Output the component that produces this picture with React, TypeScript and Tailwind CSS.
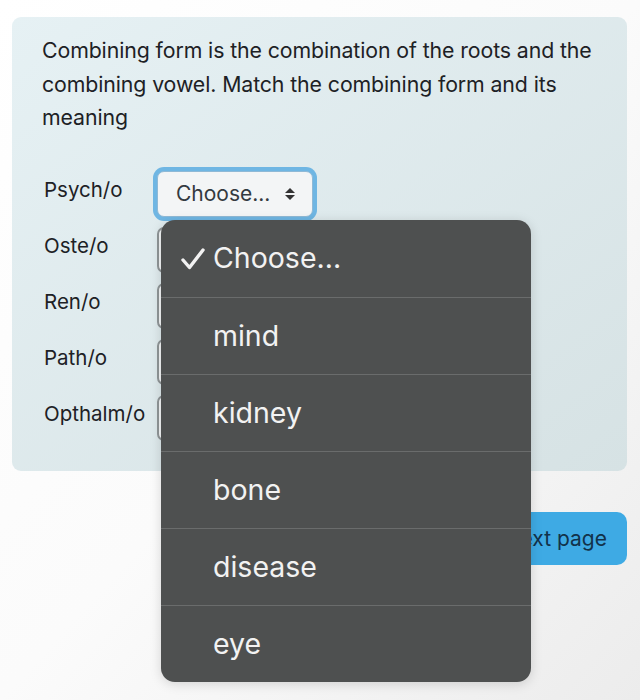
import React from "react";

const rows = ["Psych/o", "Oste/o", "Ren/o", "Path/o", "Opthalm/o"];
const options = ["Choose...", "mind", "kidney", "bone", "disease", "eye"];

function UpDown() {
  return (
    <svg width="12" height="14" viewBox="0 0 12 14" className="ml-[14px]">
      <path d="M6 1 L11 6 H1 Z" fill="#333" />
      <path d="M6 13 L11 8 H1 Z" fill="#333" />
    </svg>
  );
}

export default function App() {
  return (
    <div
      className="relative w-[640px] h-[700px] overflow-hidden bg-gradient-to-br from-[#ffffff] via-[#fbfbfb] to-[#ececec] pt-[17px]"
      style={{ fontFamily: "Inter, 'Noto Sans', sans-serif" }}
    >
      <div className="mx-[12px] w-[615px] h-[454px] rounded-[9px] bg-gradient-to-br from-[#e6f1f4] to-[#d6e2e4] pl-[30px] pr-[14px] pt-[17px]">
        <p className="text-[21.3px] leading-[33.5px] text-[#1d2125] tracking-[-0.1px]">
          Combining form is the combination of the roots and the combining vowel. Match the combining form and its meaning
        </p>
        <div className="mt-[36px] flex flex-col gap-[10px]">
          {rows.map((r, i) => (
            <div key={r} className="flex items-start">
              <div className="w-[115px] pl-[2px] pt-[7px] text-[20.5px] leading-[24px] text-[#1d2125]">{r}</div>
              {i === 0 ? (
                <div className="h-[46px] w-[156px] rounded-[7px] bg-[#f3f5f6] border border-[#8fb9d6] shadow-[0_0_0_4px_#6fb6e3] flex items-center pl-[18px] text-[21px] text-[#333a40]">
                  Choose...
                  <UpDown />
                </div>
              ) : (
                <div className="h-[46px] w-[156px] rounded-[7px] bg-[#f3f5f6] border-2 border-[#8f9597]" />
              )}
            </div>
          ))}
        </div>
      </div>

      <div className="mt-[41px] mr-[13px] flex justify-end">
        <button className="h-[53px] rounded-[10px] bg-[#3eaae4] pl-[22px] pr-[20px] text-[21px] text-[#12324a]">
          Next page
        </button>
      </div>

      <div className="absolute left-[161px] top-[220px] w-[370px] overflow-hidden rounded-[14px] bg-[#4e5050] shadow-[0_2px_12px_rgba(0,0,0,0.15)]">
        {options.map((o, i) => (
          <div
            key={o}
            className={
              "relative flex h-[77px] items-center pl-[52px] text-[28.5px] text-[#f2f2f2] " +
              (i > 0 ? "border-t border-[#6a6c6c]" : "")
            }
          >
            {i === 0 && (
              <svg width="26" height="24" viewBox="0 0 26 24" className="absolute left-[19px] top-[27px]">
                <path d="M3 13 L9.5 20.5 L23 3" stroke="#f2f2f2" strokeWidth="3.4" fill="none" strokeLinecap="round" strokeLinejoin="round" />
              </svg>
            )}
            {o}
          </div>
        ))}
      </div>
    </div>
  );
}
